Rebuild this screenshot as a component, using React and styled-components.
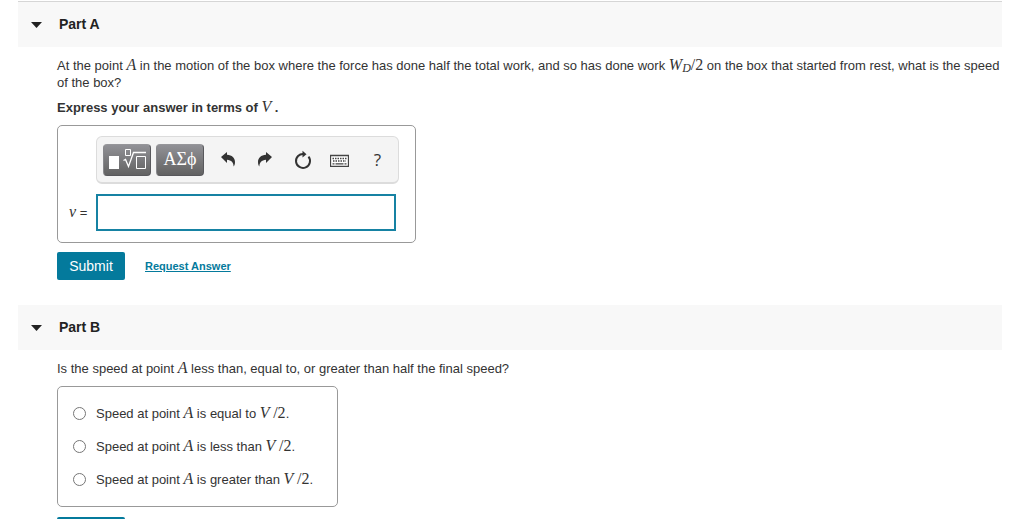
import React, { useState } from "react";
import styled, { createGlobalStyle } from "styled-components";

const GlobalStyle = createGlobalStyle`
  * {
    box-sizing: border-box;
  }

  body {
    margin: 0;
    background: #fff;
    color: #333;
    font-family: "Liberation Sans", Arial, sans-serif;
    font-size: 13px;
    line-height: 17px;
  }
`;

const Page = styled.main`
  height: 100vh;
  overflow: hidden;
  padding: 1px 22px 0 18px;
`;

const PartHeader = styled.header`
  display: flex;
  align-items: center;
  gap: 17px;
  height: ${({ $first }) => ($first ? "46px" : "45px")};
  padding-left: 13px;
  background: #f8f8f8;
  border-top: ${({ $first }) => ($first ? "1px solid #d6d6d6" : "none")};
`;

const Toggle = styled.button`
  display: flex;
  padding: 0;
  border: 0;
  background: none;
`;

const PartTitle = styled.h2`
  margin: 0;
  color: #222;
  font-size: 14px;
  font-weight: 700;
`;

const PartBody = styled.div`
  padding: 10px 0 25px 39px;
`;

const Question = styled.p`
  margin: 0 0 ${({ $gap }) => $gap}px;
  font-weight: ${({ $bold }) => ($bold ? 700 : 400)};
`;

const Var = styled.i`
  font-family: "Liberation Serif", "Times New Roman", serif;
  font-size: 16px;
  font-weight: 400;
  line-height: 1px;

  sub {
    font-size: 12px;
    line-height: 1px;
    vertical-align: -2px;
  }
`;

const Num = styled(Var).attrs({ as: "span" })``;

const AnswerBox = styled.div`
  width: fit-content;
  padding: 10px 16px 11px 11px;
  border: 1px solid #999;
  border-radius: 5px;
`;

const Toolbar = styled.div`
  display: flex;
  align-items: center;
  width: 303px;
  height: 48px;
  margin: 0 0 10px 27px;
  padding: 0 2px 0 6px;
  background: #f4f4f4;
  border: 1px solid #dcdcdc;
  border-bottom-width: 2px;
  border-radius: 6px;
`;

const PaletteButton = styled.button`
  display: flex;
  align-items: center;
  justify-content: center;
  width: 48px;
  height: 32px;
  margin-right: 5px;
  padding: 0;
  color: #fff;
  background: linear-gradient(#919196, #626262);
  border: 1px solid #77777b;
  border-color: #96969a #58585c #58585c #88888c;
  border-radius: 4px;
  font-family: "Liberation Serif", "Times New Roman", serif;
  font-size: 18px;
`;

const ToolButton = styled.button`
  display: flex;
  flex: 1;
  align-items: center;
  justify-content: center;
  height: 32px;
  padding: 0;
  color: #333;
  background: none;
  border: 0;
  font-family: "Open Sans", sans-serif;
  font-size: 17px;
`;

const InputRow = styled.div`
  display: flex;
  align-items: center;
`;

const InputLabel = styled.label`
  width: 27px;
`;

const AnswerInput = styled.input`
  width: 300px;
  height: 37px;
  padding: 0 8px;
  border: 2px solid #1682a3;
  font-size: 16px;
`;

const Actions = styled.div`
  display: flex;
  align-items: center;
  gap: 20px;
  margin-top: ${({ $gap }) => $gap}px;
`;

const SubmitButton = styled.button`
  width: 68px;
  height: 28px;
  padding: 0;
  color: #fff;
  background: #047a9c;
  border: 0;
  border-radius: 2px;
  font-family: inherit;
  font-size: 14px;
`;

const RequestLink = styled.a`
  color: #047a9c;
  font-size: 11px;
  font-weight: 700;
`;

const Choices = styled.fieldset`
  display: flex;
  flex-direction: column;
  gap: 16px;
  width: fit-content;
  margin: 0;
  padding: 18px 24px 18px 15px;
  border: 1px solid #999;
  border-radius: 5px;
`;

const Choice = styled.label`
  display: flex;
  align-items: center;
  gap: 10px;

  input {
    width: 13px;
    height: 13px;
    margin: 0;
  }
`;

const Caret = () => (
  <svg width="11" height="6" viewBox="0 0 11 6">
    <path d="M0 0h11L5.5 6z" fill="#222" />
  </svg>
);

const RootIcon = () => (
  <svg width="40" height="24" viewBox="0 0 40 24" fill="none" stroke="#fff">
    <path d="M2 8h10v13H2z" fill="#fff" stroke="none" />
    <path d="M18.5 1.5h5v6h-5z" />
    <path d="M16.500 12.500l2-1 3 7L26.500 4.500H39" strokeWidth="1.300" />
    <path d="M29.500 8.500h9v12h-9z" />
  </svg>
);

const UndoIcon = ({ flip }) => (
  <svg width="14" height="15" viewBox="0 0 14 15">
    <path
      d="M0 5L6 0v2.800C11 3 14 6 14 10c0 2-.6 3.500-1.400 4.500C12.500 10.500 10.500 8 6 7.700V11z"
      fill="#333"
      transform={flip ? "translate(14 0) scale(-1 1)" : undefined}
    />
  </svg>
);

const ResetIcon = () => (
  <svg width="18" height="20" viewBox="0 0 18 20">
    <path
      d="M10 4a7 7 0 1 0 4.500 2.600"
      fill="none"
      stroke="#333"
      strokeWidth="2"
    />
    <path d="M8.500 .8l4 3.400-4 3.400z" fill="#333" />
  </svg>
);

const KeyboardIcon = () => (
  <svg width="19" height="14" viewBox="0 -2 19 14" fill="none" stroke="#444">
    <path d="M.5.500h18v11H.5z" fill="#fff" strokeWidth="1.300" />
    <path d="M2.500 3.500h14M3 6h13" strokeDasharray="1.500 1" strokeWidth="1.500" />
    <path d="M2.500 8.800h2M5.500 8.800h8M14.500 8.800h2" strokeWidth="1.300" />
  </svg>
);

const Half = () => (
  <>
    <Var>V</Var> <Num>/2</Num>
  </>
);

const Part = ({ title, first, children }) => {
  const [open, setOpen] = useState(true);
  return (
    <section>
      <PartHeader $first={first}>
        <Toggle
          aria-label={`Toggle ${title}`}
          aria-expanded={open}
          onClick={() => setOpen(!open)}
        >
          <Caret />
        </Toggle>
        <PartTitle>{title}</PartTitle>
      </PartHeader>
      {open && <PartBody>{children}</PartBody>}
    </section>
  );
};

const choices = ["equal to", "less than", "greater than"];

const App = () => {
  return (
    <Page>
      <GlobalStyle />
      <Part title="Part A" first>
        <Question $gap={8}>
          At the point <Var>A</Var> in the motion of the box where the force has
          done half the total work, and so has done work{" "}
          <Var>
            W<sub>D</sub>
          </Var>
          <Num>/2</Num> on the box that started from rest, what is the speed of
          the box?
        </Question>
        <Question $bold $gap={9}>
          Express your answer in terms of <Var>V</Var> .
        </Question>
        <AnswerBox>
          <Toolbar>
            <PaletteButton aria-label="Templates">
              <RootIcon />
            </PaletteButton>
            <PaletteButton aria-label="Symbols">ΑΣϕ</PaletteButton>
            <ToolButton aria-label="Undo">
              <UndoIcon />
            </ToolButton>
            <ToolButton aria-label="Redo">
              <UndoIcon flip />
            </ToolButton>
            <ToolButton aria-label="Reset">
              <ResetIcon />
            </ToolButton>
            <ToolButton aria-label="Keyboard shortcuts">
              <KeyboardIcon />
            </ToolButton>
            <ToolButton aria-label="Help">?</ToolButton>
          </Toolbar>
          <InputRow>
            <InputLabel htmlFor="speed">
              <Var>v</Var> =
            </InputLabel>
            <AnswerInput id="speed" type="text" />
          </InputRow>
        </AnswerBox>
        <Actions $gap={9}>
          <SubmitButton>Submit</SubmitButton>
          <RequestLink href="#request">Request Answer</RequestLink>
        </Actions>
      </Part>
      <Part title="Part B">
        <Question $gap={9}>
          Is the speed at point <Var>A</Var> less than, equal to, or greater
          than half the final speed?
        </Question>
        <Choices>
          {choices.map((text) => (
            <Choice key={text}>
              <input type="radio" name="comparison" value={text} />
              <span>
                Speed at point <Var>A</Var> is {text} <Half />.
              </span>
            </Choice>
          ))}
        </Choices>
        <Actions $gap={10}>
          <SubmitButton>Submit</SubmitButton>
        </Actions>
      </Part>
    </Page>
  );
};

export default App;
